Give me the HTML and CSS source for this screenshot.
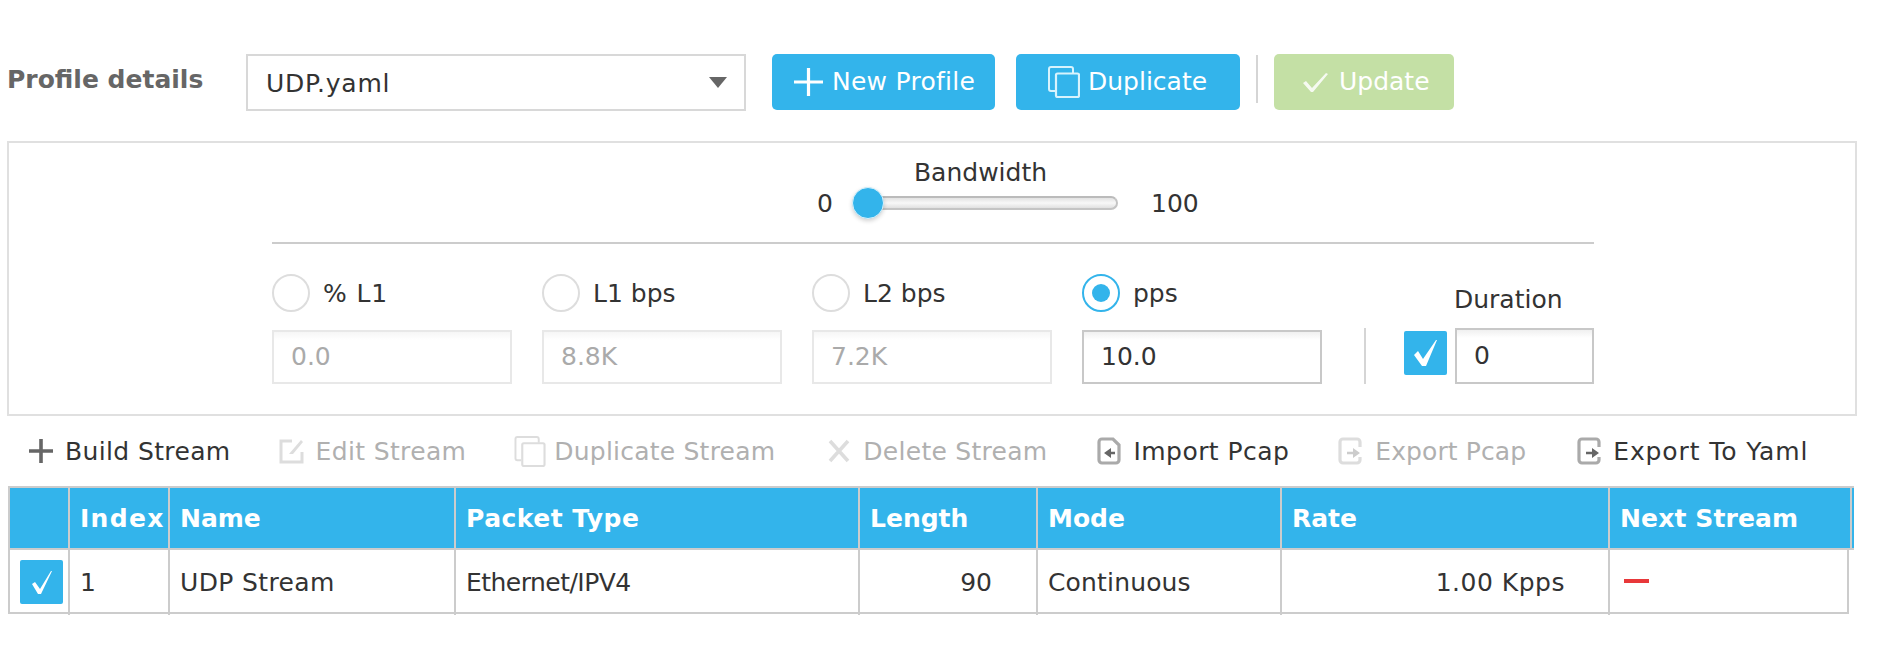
FILE: index.html
```html
<!DOCTYPE html>
<html lang="en">
<head>
<meta charset="utf-8">
<title>Profile details</title>
<link rel="stylesheet" href="styles.css">
</head>
<body>
<svg class="defs" width="0" height="0" aria-hidden="true">
  <defs>
    <symbol id="i-copy" viewBox="0 0 32 32">
      <path class="copy-back" d="M25 7V3a2 2 0 0 0-2-2H3a2 2 0 0 0-2 2v20a2 2 0 0 0 2 2h4" fill="none" stroke="currentColor" stroke-width="2"/>
      <rect x="8" y="7.500" width="23" height="23.500" rx="1.500" fill="none" stroke="currentColor" stroke-width="2.200"/>
    </symbol>
    <symbol id="i-in" viewBox="0 0 24 28">
      <path d="M16 2H5a3 3 0 0 0-3 3v18a3 3 0 0 0 3 3h14a3 3 0 0 0 3-3V8z" fill="none" stroke="currentColor" stroke-width="3.200"/>
      <path class="arrow" d="M7 16l7-5v3.700h4v2.600h-4V21z"/>
    </symbol>
    <symbol id="i-out" viewBox="0 0 24 28">
      <path d="M22 10V5a3 3 0 0 0-3-3H5a3 3 0 0 0-3 3v18a3 3 0 0 0 3 3h14a3 3 0 0 0 3-3v-3" fill="none" stroke="currentColor" stroke-width="3.200"/>
      <path class="arrow" d="M9 14.700h6V11l7 5-7 5v-3.700H9z"/>
    </symbol>
  </defs>
</svg>
<header class="top">
  <span class="title">Profile details</span>
  <div class="select">
    <span class="select-text">UDP.yaml</span>
    <span class="caret"></span>
  </div>
  <button class="btn btn-new">
    <svg class="ic-plus" viewBox="0 0 29 28"><path d="M14.500 0v28M0 14h29" stroke="currentColor" stroke-width="3.200"/></svg>
    <span>New Profile</span>
  </button>
  <button class="btn btn-dup">
    <svg class="ic-copy"><use href="#i-copy"/></svg>
    <span>Duplicate</span>
  </button>
  <span class="top-sep"></span>
  <button class="btn btn-upd">
    <svg class="ic-check" viewBox="0 0 27 21"><path d="M1 11l3-2 6 7L24 1l2 1-15 18H9z" fill="currentColor"/></svg>
    <span>Update</span>
  </button>
</header>

<section class="panel">
  <div class="slider-block">
    <div class="bw-label">Bandwidth</div>
    <div class="slider-row">
      <span class="min">0</span>
      <div class="track"><span class="thumb"></span></div>
      <span class="max">100</span>
    </div>
  </div>
  <div class="divider"></div>
  <div class="fields">
    <div class="field">
      <label class="radio-line"><span class="radio"></span><span class="radio-text pct">% L1</span></label>
      <div class="input off">0.0</div>
    </div>
    <div class="field">
      <label class="radio-line"><span class="radio"></span><span class="radio-text">L1 bps</span></label>
      <div class="input off">8.8K</div>
    </div>
    <div class="field">
      <label class="radio-line"><span class="radio"></span><span class="radio-text">L2 bps</span></label>
      <div class="input off">7.2K</div>
    </div>
    <div class="field">
      <label class="radio-line"><span class="radio on"></span><span class="radio-text">pps</span></label>
      <div class="input">10.0</div>
    </div>
    <span class="v-sep"></span>
    <div class="duration">
      <div class="dur-label">Duration</div>
      <div class="dur-row">
        <span class="check"><svg viewBox="0 0 24 26"><path d="M0 15l4-4 5 8L22 0h1L12 26H8z" fill="currentColor"/></svg></span>
        <div class="input dur-input">0</div>
      </div>
    </div>
  </div>
</section>

<nav class="toolbar">
  <span class="tool t-build"><svg class="t-plus" viewBox="0 0 26 24"><path d="M13 0v24M1 12h24" stroke="currentColor" stroke-width="3.600"/></svg>Build Stream</span>
  <span class="tool dis t-edit"><svg class="t-edit-ic" viewBox="0 0 25 25"><path d="M13 2H2v21h21V13" fill="none" stroke="currentColor" stroke-width="3"/><path d="M10 15L22 1l2 2-10 12z" fill="currentColor"/></svg>Edit Stream</span>
  <span class="tool dis t-dup"><svg class="t-copy"><use href="#i-copy"/></svg>Duplicate Stream</span>
  <span class="tool dis t-del"><svg class="t-x" viewBox="0 0 24 24"><path d="M3 2l18 20M21 2L3 22" stroke="currentColor" stroke-width="3.600"/></svg>Delete Stream</span>
  <span class="tool t-imp"><svg class="t-io"><use href="#i-in"/></svg>Import Pcap</span>
  <span class="tool dis t-exp"><svg class="t-io"><use href="#i-out"/></svg>Export Pcap</span>
  <span class="tool t-yaml"><svg class="t-io"><use href="#i-out"/></svg>Export To Yaml</span>
</nav>

<div class="table">
  <div class="thead">
    <div class="th"></div>
    <div class="th th-index">Index</div>
    <div class="th">Name</div>
    <div class="th th-type">Packet Type</div>
    <div class="th">Length</div>
    <div class="th">Mode</div>
    <div class="th">Rate</div>
    <div class="th th-next">Next Stream</div>
    <div class="th th-end"></div>
  </div>
  <div class="tbody">
    <div class="td td-check"><span class="check check-row"><svg viewBox="0 0 24 26"><path d="M2 15l3-2 5 7L21 2h1L11 25H8z" fill="currentColor"/></svg></span></div>
    <div class="td">1</div>
    <div class="td td-name">UDP Stream</div>
    <div class="td td-type">Ethernet/IPV4</div>
    <div class="td right td-len">90</div>
    <div class="td td-mode">Continuous</div>
    <div class="td right td-rate">1.00 Kpps</div>
    <div class="td"><span class="dash"></span></div>
  </div>
</div>
</body>
</html>
```
FILE: styles.css
```css
* { box-sizing: border-box; }
html, body { margin: 0; padding: 0; background: #fff; }
body {
  width: 1888px;
  height: 666px;
  overflow: hidden;
  font-family: "DejaVu Sans", sans-serif;
  font-size: 25px;
  color: #333;
  padding-top: 54px;
}
.defs { position: absolute; }

/* top bar */
.top { display: flex; align-items: flex-start; height: 57px; padding-left: 7px; }
.title { width: 239px; font-weight: bold; color: #666; line-height: 50px; margin-top: 1px; white-space: nowrap; }
.select { width: 500px; height: 57px; border: 2px solid #d8d8d8; display: flex; align-items: center; justify-content: space-between; padding: 2px 17px 0 18px; }
.select-text { letter-spacing: .77px; }
.caret { width: 0; height: 0; margin-top: -2px; border-left: 9px solid transparent; border-right: 9px solid transparent; border-top: 11px solid #666; }
.btn { height: 56px; border: 0; border-radius: 5px; color: #fff; font: inherit; display: flex; align-items: center; background: #33b4eb; padding: 0 0 2px; white-space: nowrap; }
.btn-new { width: 223px; margin-left: 26px; padding-left: 22px; gap: 9px; letter-spacing: .26px; }
.btn-dup { width: 224px; margin-left: 21px; padding-left: 32px; gap: 8px; }
.btn-upd { width: 180px; margin-left: 16px; padding-left: 28px; gap: 10px; background: #c4e0a5; }
.ic-plus { width: 29px; height: 28px; margin-top: 2px; }
.ic-copy { width: 32px; height: 32px; margin-top: 2px; color: #d8f3fd; }
.ic-copy .copy-back { opacity: .6; }
.ic-check { width: 27px; height: 21px; margin-top: 2px; opacity: .85; }
.top-sep { width: 2px; height: 48px; background: #d5d5d5; margin: 1px 0 0 16px; }

/* panel */
.panel { width: 1850px; height: 275px; margin: 30px 0 0 7px; border: 2px solid #e0e0e0; }
.slider-block { height: 99px; }
.bw-label { text-align: center; padding: 16px 0 0 0; margin-left: 97px; line-height: 28px; }
.slider-row { display: flex; align-items: center; height: 32px; margin: 0 0 0 808px; }
.min { width: 37px; }
.track { position: relative; width: 264px; height: 14px; border: 2px solid #c4c4c4; border-top-color: #bbb; border-radius: 7px; background: linear-gradient(#e2e2e2, #f8f8f8 50%, #e0e0e0); }
.thumb { position: absolute; left: -4px; top: -11px; width: 32px; height: 32px; border-radius: 50%; background: #33b4eb; border: 1px solid #d6f1fc; box-shadow: 0 2px 4px rgba(0,0,0,.18); }
.max { margin-left: 33px; }
.divider { height: 2px; margin: 0 261px 0 263px; background: #ccc; }
.fields { display: flex; align-items: flex-start; padding: 30px 0 0 263px; }
.field { width: 240px; margin-right: 30px; }
.radio-line { display: flex; align-items: center; height: 38px; }
.radio-text { padding-top: 1px; }
.radio-text.pct { letter-spacing: .9px; }
.radio { width: 38px; height: 38px; border-radius: 50%; border: 2px solid #ddd; margin-right: 13px; flex: none; }
.radio.on { border-color: #33b4eb; position: relative; }
.radio.on::after { content: ""; position: absolute; left: 8px; top: 8px; width: 18px; height: 18px; border-radius: 50%; background: #33b4eb; }
.input { height: 54px; margin-top: 18px; border: 2px solid #c8c8c8; padding-left: 17px; line-height: 50px; background: linear-gradient(#f0f0f0, #fff 8px); }
.input.off { border-color: #e8e8e8; color: #aaa; background: linear-gradient(#f6f6f6, #fff 8px); }
.v-sep { width: 2px; height: 56px; margin: 54px 0 0 12px; background: #d5d5d5; }
.duration { margin-left: 38px; width: 190px; }
.dur-label { margin: 12px 0 0 50px; line-height: 28px; }
.dur-row { display: flex; align-items: flex-start; margin-top: 14px; }
.check { width: 43px; height: 44px; margin-top: 3px; background: #33b4eb; border-radius: 2px; color: #fff; display: flex; align-items: center; justify-content: center; }
.check svg { width: 24px; height: 26px; }
.dur-input { width: 139px; height: 56px; margin: 0 0 0 8px; line-height: 52px; }

/* toolbar */
.toolbar { display: flex; align-items: center; height: 46px; margin-top: 12px; padding-left: 28px; }
.tool { display: flex; align-items: center; white-space: nowrap; color: #333; }
.tool.dis { color: #b0b0b0; }
.tool.dis svg { color: #ddd; }
.t-build { letter-spacing: .37px; }
.t-build svg { color: #666; }
.t-plus { width: 26px; height: 24px; margin-right: 11px; }
.t-edit { margin-left: 48px; letter-spacing: .35px; }
.t-edit-ic { width: 25px; height: 25px; margin-right: 12px; }
.t-dup { margin-left: 48px; letter-spacing: .22px; }
.t-copy { width: 32px; height: 31px; margin-right: 8px; }
.t-del { margin-left: 52px; letter-spacing: .28px; }
.t-x { width: 24px; height: 24px; margin-right: 12px; }
.t-imp { margin-left: 49px; letter-spacing: .44px; }
.t-exp { margin-left: 49px; letter-spacing: .1px; }
.t-yaml { margin-left: 51px; letter-spacing: .9px; }
.t-io { width: 24px; height: 28px; margin-right: 13px; color: #aaa; fill: #666; }
.t-yaml .t-io { margin-right: 12px; }
.tool.dis .t-io { color: #ddd; fill: #ccc; }

/* table */
.table { width: 1846px; margin: 12px 0 0 8px; }
.thead, .tbody { display: grid; }
.thead { background: #33b4eb; border: 2px solid #ccc; border-right: 0; height: 64px; grid-template-columns: 60px 100px 286px 404px 178px 244px 328px 242px 2px; }
.th { color: #fff; font-weight: bold; border-right: 2px solid #ccc; padding-left: 10px; line-height: 62px; white-space: nowrap; }
.th-end { border-right: 0; padding: 0; }
.th-index { letter-spacing: 1.3px; }
.th-type { letter-spacing: .48px; }
.th-next { letter-spacing: .13px; }
.tbody { border: 2px solid #ccc; border-top: 0; height: 64px; width: 1841px; grid-template-columns: 60px 100px 286px 404px 178px 244px 328px 237px; }
.td { border-right: 2px solid #ccc; padding: 0 0 0 10px; line-height: 65px; white-space: nowrap; }
.td:last-child { border-right: 0; }
.td.right { text-align: right; }
.td-len { padding-right: 44px; }
.td-name { letter-spacing: .36px; }
.td-type { letter-spacing: -.53px; }
.td-mode { letter-spacing: .16px; }
.td-rate { letter-spacing: .5px; padding-right: 43px; }
.td-check { padding: 10px 0 0 10px; }
.check-row { margin: 0; }
.dash { display: inline-block; width: 25px; height: 4px; background: #e8383a; vertical-align: middle; margin: -6px 0 0 4px; }
```
